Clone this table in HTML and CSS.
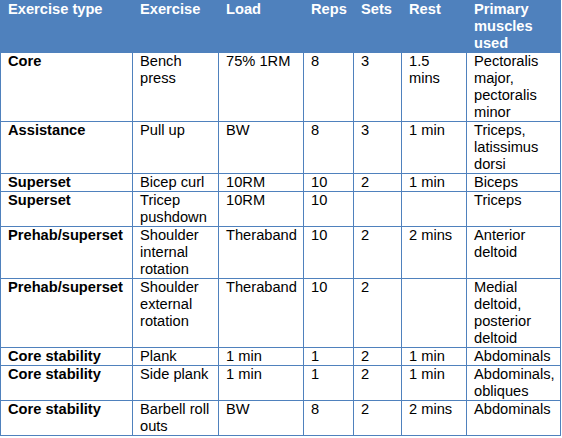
FILE: index.html
```html
<!DOCTYPE html>
<html>
<head>
<meta charset="utf-8">
<link rel="stylesheet" href="styles.css">
</head>
<body>
<table class="plan">
  <colgroup>
    <col class="c-type">
    <col class="c-ex">
    <col class="c-load">
    <col class="c-reps">
    <col class="c-sets">
    <col class="c-rest">
    <col class="c-mus">
  </colgroup>
  <thead>
    <tr>
      <th>Exercise type</th>
      <th>Exercise</th>
      <th>Load</th>
      <th>Reps</th>
      <th>Sets</th>
      <th>Rest</th>
      <th class="last">Primary muscles used</th>
    </tr>
  </thead>
  <tbody>
    <tr>
      <td class="type">Core</td>
      <td>Bench press</td>
      <td>75% 1RM</td>
      <td>8</td>
      <td>3</td>
      <td>1.5 mins</td>
      <td class="last">Pectoralis major, pectoralis minor</td>
    </tr>
    <tr>
      <td class="type">Assistance</td>
      <td>Pull up</td>
      <td>BW</td>
      <td>8</td>
      <td>3</td>
      <td>1 min</td>
      <td class="last">Triceps, latissimus dorsi</td>
    </tr>
    <tr>
      <td class="type">Superset</td>
      <td>Bicep curl</td>
      <td>10RM</td>
      <td>10</td>
      <td>2</td>
      <td>1 min</td>
      <td class="last">Biceps</td>
    </tr>
    <tr>
      <td class="type">Superset</td>
      <td>Tricep pushdown</td>
      <td>10RM</td>
      <td>10</td>
      <td></td>
      <td></td>
      <td class="last">Triceps</td>
    </tr>
    <tr>
      <td class="type">Prehab/superset</td>
      <td>Shoulder internal rotation</td>
      <td>Theraband</td>
      <td>10</td>
      <td>2</td>
      <td>2 mins</td>
      <td class="last">Anterior deltoid</td>
    </tr>
    <tr>
      <td class="type">Prehab/superset</td>
      <td>Shoulder external rotation</td>
      <td>Theraband</td>
      <td>10</td>
      <td>2</td>
      <td></td>
      <td class="last">Medial deltoid, posterior deltoid</td>
    </tr>
    <tr>
      <td class="type">Core stability</td>
      <td>Plank</td>
      <td>1 min</td>
      <td>1</td>
      <td>2</td>
      <td>1 min</td>
      <td class="last">Abdominals</td>
    </tr>
    <tr>
      <td class="type">Core stability</td>
      <td>Side plank</td>
      <td>1 min</td>
      <td>1</td>
      <td>2</td>
      <td>1 min</td>
      <td class="last">Abdominals, obliques</td>
    </tr>
    <tr>
      <td class="type">Core stability</td>
      <td>Barbell roll outs</td>
      <td>BW</td>
      <td>8</td>
      <td>2</td>
      <td>2 mins</td>
      <td class="last">Abdominals</td>
    </tr>
  </tbody>
</table>
</body>
</html>
```

FILE: styles.css
```css
html, body {
  margin: 0;
  padding: 0;
  background: #ffffff;
}

.plan {
  border-collapse: collapse;
  table-layout: fixed;
  width: 560px;
  font-family: "Liberation Sans", Arial, sans-serif;
  font-size: 14.67px;
  line-height: 17px;
  color: #000000;
}

.c-type { width: 132px; }
.c-ex { width: 86px; }
.c-load { width: 85px; }
.c-reps { width: 50px; }
.c-sets { width: 48px; }
.c-rest { width: 65px; }
.c-mus { width: 94px; }

.plan th,
.plan td {
  border: 1px solid #4f81bd;
  padding: 0 7px;
  text-align: left;
  vertical-align: top;
}

.plan th {
  background: #4f81bd;
  color: #ffffff;
  font-weight: bold;
}

.plan td.type {
  font-weight: bold;
}

.plan .last {
  padding-right: 2px;
}
```
